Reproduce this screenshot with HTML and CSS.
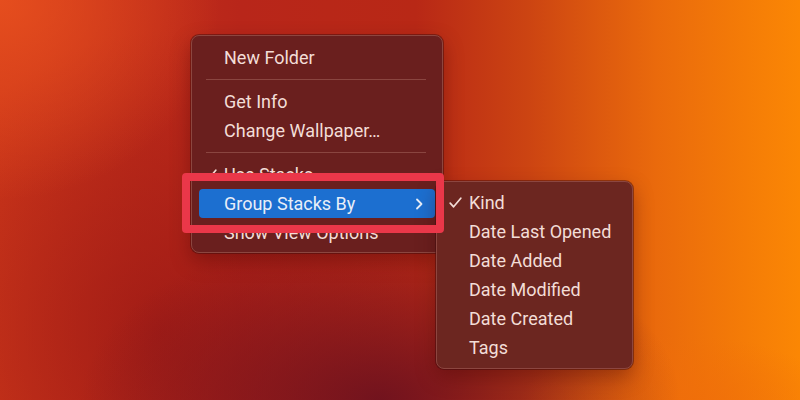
FILE: index.html
```html
<!DOCTYPE html>
<html lang="en">
<head>
    <meta charset="UTF-8">
    <meta name="viewport" content="width=device-width, initial-scale=1.0">

    <title>Desktop Context Menu</title>

    <link rel="stylesheet" href="styles.css">
</head>
<body>
    <div class="desktop">
        <!-- main desktop menu -->
        <div class="menu main-menu">
            <div class="menu-item">New Folder</div>
            <div class="separator"></div>
            <div class="menu-item">Get Info</div>
            <div class="menu-item">Change Wallpaper…</div>
            <div class="separator"></div>
            <div class="menu-item">
                <svg class="check" width="13" height="11" viewBox="0 0 13 11">
                    <path d="M1.2 6.2 L4.6 9.8 L11.8 1.2" fill="none" stroke="currentColor" stroke-width="1.7" stroke-linecap="round" stroke-linejoin="round"/>
                </svg>
                Use Stacks
            </div>
            <div class="menu-item active">
                Group Stacks By
                <svg class="chevron" width="8" height="12" viewBox="0 0 8 12">
                    <path d="M2 1.5 L6.5 6 L2 10.5" fill="none" stroke="currentColor" stroke-width="1.8" stroke-linecap="round" stroke-linejoin="round"/>
                </svg>
            </div>
            <div class="menu-item">Show View Options</div>
        </div>

        <!-- submenu for Group Stacks By -->
        <div class="menu sub-menu">
            <div class="menu-item">
                <svg class="check" width="13" height="11" viewBox="0 0 13 11">
                    <path d="M1.2 6.2 L4.6 9.8 L11.8 1.2" fill="none" stroke="currentColor" stroke-width="1.7" stroke-linecap="round" stroke-linejoin="round"/>
                </svg>
                Kind
            </div>
            <div class="menu-item">Date Last Opened</div>
            <div class="menu-item">Date Added</div>
            <div class="menu-item">Date Modified</div>
            <div class="menu-item">Date Created</div>
            <div class="menu-item">Tags</div>
        </div>

        <div class="highlight-box"></div>
    </div>
</body>
</html>
```

FILE: styles.css
```css
/* Reset default styles */
body, html, div {
    margin: 0;
    padding: 0;
}

body {
    font-family: "Roboto", "Liberation Sans", sans-serif;
}

.desktop {
    position: relative;
    width: 800px;
    height: 400px;
    overflow: hidden;
    background:
        radial-gradient(ellipse 300px 170px at 380px 400px, rgba(110, 18, 30, 0.95), rgba(110, 18, 30, 0) 100%),
        radial-gradient(ellipse 160px 70px at 680px 405px, rgba(240, 110, 10, 0.85), rgba(240, 110, 10, 0) 100%),
        radial-gradient(ellipse 220px 200px at 0px 0px, rgba(232, 80, 30, 0.9), rgba(232, 80, 30, 0) 100%),
        radial-gradient(ellipse 260px 300px at 160px 330px, rgba(150, 22, 20, 0.7), rgba(150, 22, 20, 0) 100%),
        linear-gradient(90deg, #cc361a 0%, #b8261a 30%, #b82816 52%, #cc4412 66%, #ea6a0c 82%, #fb8704 100%);
}

.menu {
    position: absolute;
    box-sizing: border-box;
    border-radius: 8px;
    border: 1px solid #8c4640;
    box-shadow: 0 0 0 1px rgba(60, 10, 10, 0.45), 0 8px 20px rgba(60, 0, 0, 0.35);
    color: #f3ddd7;
    font-size: 18px;
    font-weight: 400;
}

.main-menu {
    left: 191px;
    top: 35px;
    width: 252px;
    height: 218px;
    padding: 7px 7px 0;
    background: #6a1f1e;
}

.sub-menu {
    left: 436px;
    top: 181px;
    width: 197px;
    height: 188px;
    padding: 6px 7px 0;
    background: #6c2620;
}

.menu-item {
    position: relative;
    display: flex;
    align-items: center;
    height: 29px;
    padding-left: 25px;
    border-radius: 4px;
    white-space: nowrap;
}

.check {
    position: absolute;
    left: 5px;
    top: 9px;
}

.separator {
    height: 1px;
    margin: 7px 9px 7px 7px;
    background: #8a4540;
}

.menu-item.active {
    background: #1c6fd0;
    color: #e8eef8;
}

.chevron {
    position: absolute;
    right: 12px;
    top: 9px;
}

/* red annotation frame around the highlighted row */
.highlight-box {
    position: absolute;
    left: 182px;
    top: 173px;
    width: 262px;
    height: 60px;
    box-sizing: border-box;
    border: 8px solid #ea3749;
    border-radius: 4px;
}
```
